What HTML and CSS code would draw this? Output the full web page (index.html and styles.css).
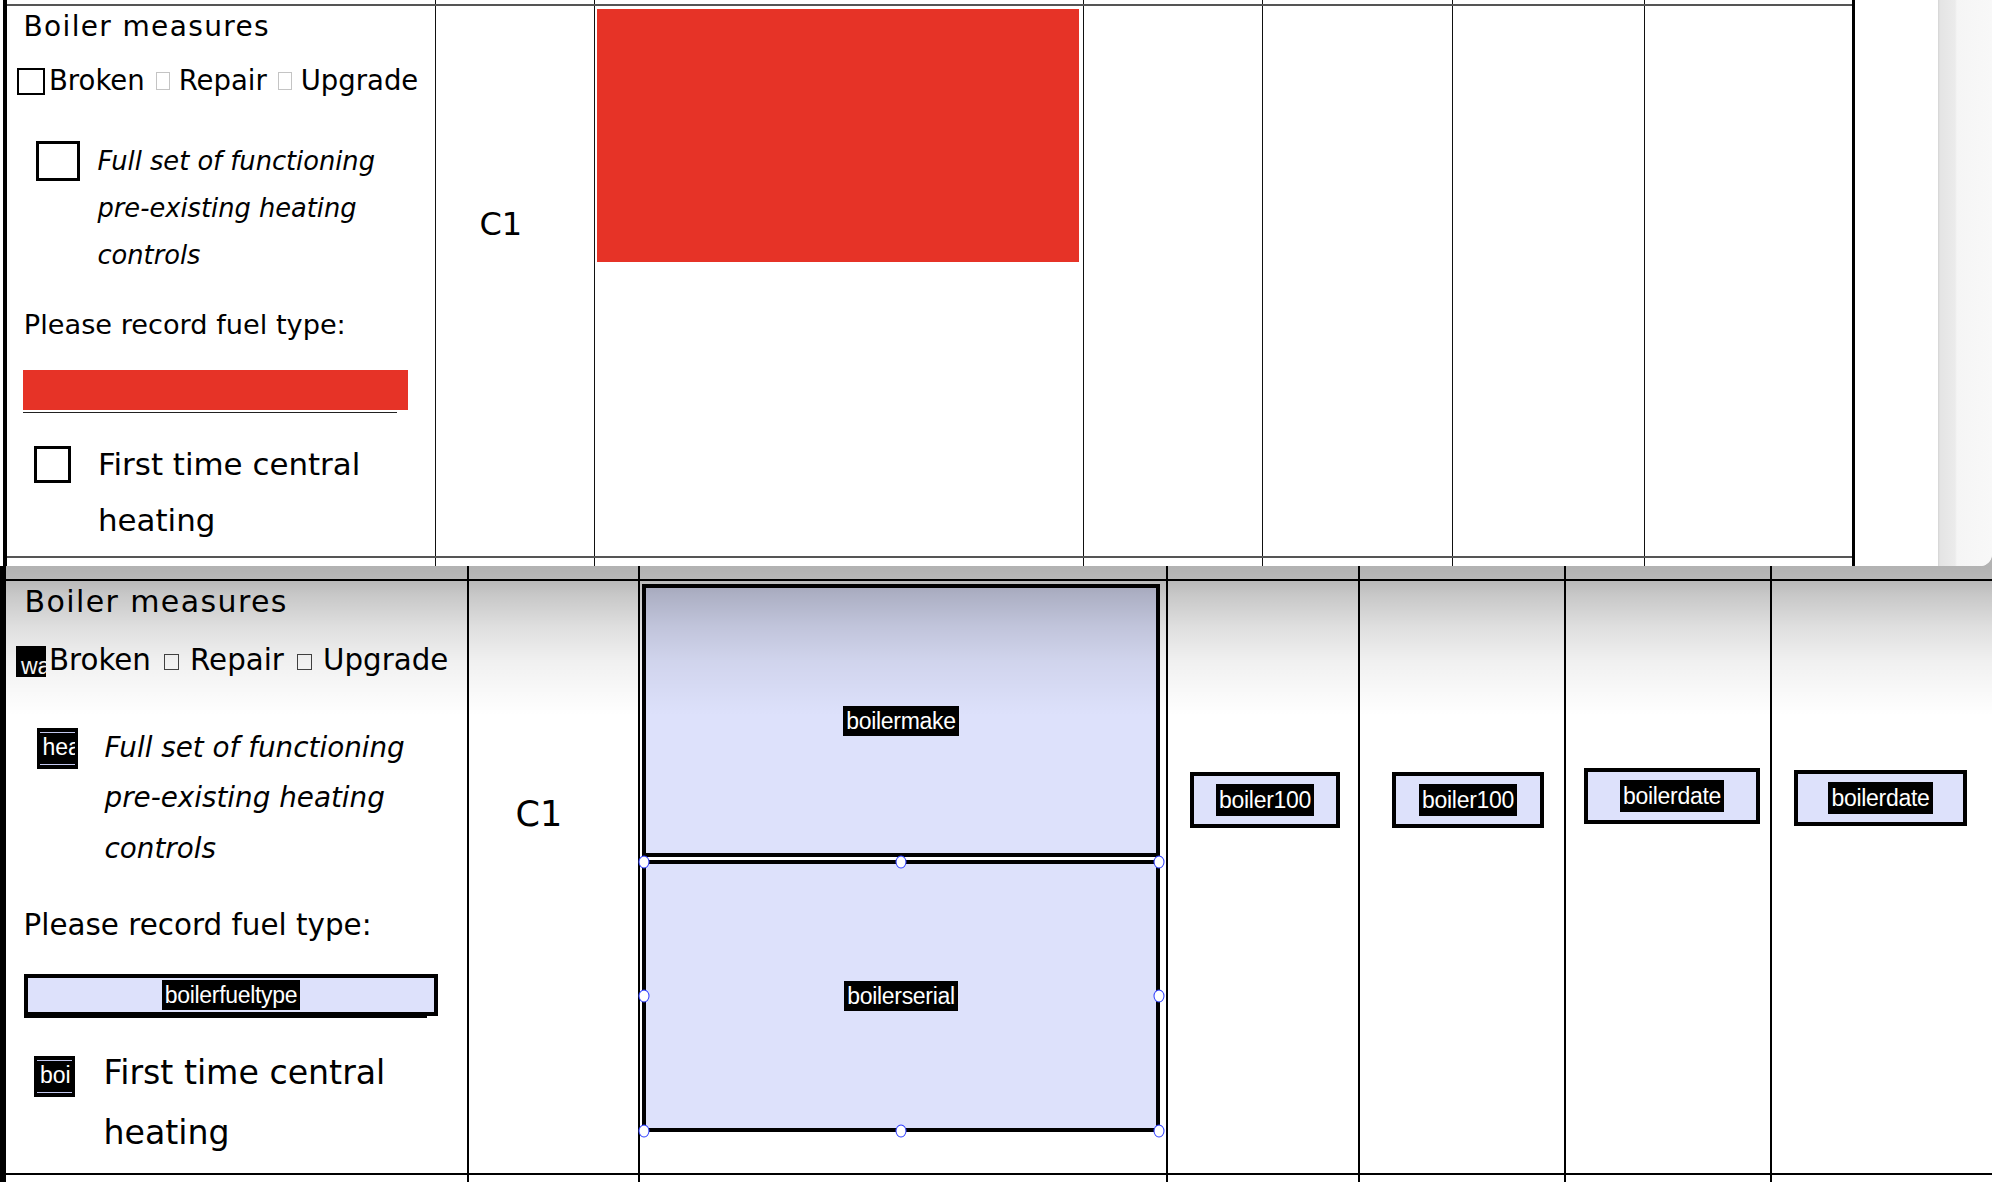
FILE: index.html
```html
<!DOCTYPE html>
<html lang="en">
<head>
<meta charset="utf-8">
<title>Boiler measures</title>
<link rel="stylesheet" href="styles.css">
</head>
<body>
<div class="win">
  <div class="doc">
    <div class="ttable">
      <div class="trow tprev">
        <div class="c"></div><div class="c"></div><div class="c"></div><div class="c"></div><div class="c"></div><div class="c"></div><div class="c"></div>
      </div>
      <div class="trow tmain">
        <div class="c tl">
          <div class="tl-title">Boiler measures</div>
          <div class="tl-opts">
            <span class="chk chk1"></span>
            <span class="opts">Broken <i class="tofu"></i> Repair <i class="tofu"></i> Upgrade</span>
          </div>
          <div class="tl-fn">
            <span class="chk chk2"></span>
            <div class="fn-text tfn">Full set of functioning<br>pre-existing heating<br>controls</div>
          </div>
          <div class="tl-fuel-label">Please record fuel type:</div>
          <div class="tl-red"></div>
          <div class="tl-rule"></div>
          <div class="tl-first">
            <span class="chk chk3"></span>
            <div class="first-text tfirst">First time central<br>heating</div>
          </div>
        </div>
        <div class="c tc1">C1</div>
        <div class="c"><div class="tred"></div></div>
        <div class="c"></div>
        <div class="c"></div>
        <div class="c"></div>
        <div class="c"></div>
      </div>
      <div class="trow tnext">
        <div class="c"></div><div class="c"></div><div class="c"></div><div class="c"></div><div class="c"></div><div class="c"></div><div class="c"></div>
      </div>
    </div>
  </div>
  <div class="vscroll"></div>
</div>

<div class="page">
  <div class="brow bprev">
    <div class="c"></div><div class="c"></div><div class="c"></div><div class="c"></div><div class="c"></div><div class="c"></div><div class="c"></div>
  </div>
  <div class="brow bmain">
    <div class="c bl">
      <div class="bl-title">Boiler measures</div>
      <div class="bl-opts">
        <span class="wbox">wa</span>
        <span class="opts">Broken <i class="tofu dark"></i> Repair <i class="tofu dark"></i> Upgrade</span>
      </div>
      <div class="bl-fn">
        <span class="cb cb-hea"><span class="cb-in">hea</span></span>
        <div class="fn-text bfn">Full set of functioning<br>pre-existing heating<br>controls</div>
      </div>
      <div class="bl-fuel-label">Please record fuel type:</div>
      <div class="fld bl-fuel"><span class="lbl">boilerfueltype</span></div>
      <div class="bl-rule"></div>
      <div class="bl-first">
        <span class="cb cb-boi"><span class="cb-in">boi</span></span>
        <div class="first-text bfirst">First time central<br>heating</div>
      </div>
    </div>
    <div class="c bc1">C1</div>
    <div class="c bfields">
      <div class="fld make"><span class="lbl">boilermake</span></div>
      <div class="fld serial">
        <span class="lbl">boilerserial</span>
        <i class="hdl h-tl"></i><i class="hdl h-tm"></i><i class="hdl h-tr"></i>
        <i class="hdl h-ml"></i><i class="hdl h-mr"></i>
        <i class="hdl h-bl"></i><i class="hdl h-bm"></i><i class="hdl h-br"></i>
      </div>
    </div>
    <div class="c"><div class="fld small f4"><span class="lbl">boiler100</span></div></div>
    <div class="c"><div class="fld small f5"><span class="lbl">boiler100</span></div></div>
    <div class="c"><div class="fld small f6"><span class="lbl">boilerdate</span></div></div>
    <div class="c"><div class="fld small f7"><span class="lbl">boilerdate</span></div></div>
  </div>
  <div class="brow bnext">
    <div class="c"></div><div class="c"></div><div class="c"></div><div class="c"></div><div class="c"></div><div class="c"></div><div class="c"></div>
  </div>
  <div class="shade"></div>
</div>
</body>
</html>
```

FILE: styles.css
```css
html, body {
  margin: 0;
  padding: 0;
  width: 1992px;
  height: 1182px;
  overflow: hidden;
}
body {
  background: #b3b3b3;
  font-family: "DejaVu Sans", Verdana, sans-serif;
  color: #000;
}
i { font-style: normal; }

/* ---------- top window ---------- */
.win {
  display: flex;
  height: 566px;
  background: #fff;
  border-bottom-right-radius: 12px;
  overflow: hidden;
}
.doc { flex: 1; background: #fff; }
.vscroll {
  width: 54px;
  background: linear-gradient(90deg, #d4d4d4 0, #e4e4e4 2px, #ebebeb 17px, #f5f5f5 19px, #f8f8f8 100%);
}
.ttable {
  margin-left: 3px;
  width: 1852px;
  height: 566px;
  box-sizing: border-box;
  border-left: 4px solid #000;
  border-right: 3px solid #000;
}
.trow {
  display: grid;
  grid-template-columns: 428px 159px 489px 179px 190px 192px 208px;
}
.c { box-sizing: border-box; min-width: 0; }
.trow > .c + .c { border-left: 1px solid #111; }
.tprev { height: 4px; }
.tmain {
  height: 554px;
  box-sizing: border-box;
  border-top: 2px solid #555;
  border-bottom: 2px solid #555;
}
.tnext { height: 8px; }

.chk {
  display: block;
  flex: none;
  box-sizing: border-box;
  border: 3px solid #000;
  background: #fff;
}
.opts { white-space: nowrap; }
.tofu {
  display: inline-block;
  box-sizing: border-box;
  width: 14px;
  height: 18px;
  margin: 0 0 0 2.5px;
  border: 1px solid #c4c4c4;
  vertical-align: baseline;
}
.tofu.dark {
  width: 15px;
  height: 16px;
  margin: 0 2px 0 3.5px;
  border-color: #444;
}
.fn-text { font-style: italic; white-space: nowrap; }
.first-text { white-space: nowrap; }

.tl-title {
  font-size: 28px;
  letter-spacing: 1.35px;
  line-height: 42px;
  padding-left: 16.5px;
  white-space: nowrap;
}
.tl-opts {
  display: flex;
  align-items: center;
  height: 64px;
  padding-left: 10px;
  font-size: 27.5px;
}
.chk1 { width: 28px; height: 27px; border-width: 2.7px; margin: 2px 4px 0 0; }
.tl-fn { display: flex; margin-top: 25.5px; }
.chk2 { width: 44px; height: 40px; margin: 3.5px 0 0 29px; }
.tfn { font-size: 25.7px; line-height: 47px; margin-left: 17.5px; }
.tl-fuel-label {
  margin-top: 26.5px;
  font-size: 27.2px;
  line-height: 40px;
  padding-left: 16.8px;
  white-space: nowrap;
}
.tl-red {
  margin: 25px 0 0 16px;
  width: 385px;
  height: 40px;
  background: #e63327;
}
.tl-rule {
  margin: 1.5px 0 0 16px;
  width: 374px;
  height: 1.5px;
  background: #222;
}
.tl-first { display: flex; margin-top: 23px; }
.chk3 { width: 37px; height: 37px; margin: 10px 0 0 27px; }
.tfirst { font-size: 30.9px; line-height: 56px; margin-left: 27px; }

.tc1 {
  padding: 198px 0 0 43.5px;
  font-size: 32px;
  line-height: 40px;
}
.tred {
  margin: 3px 0 0 2px;
  width: 482px;
  height: 253px;
  background: #e63327;
}

/* ---------- lower page (form editor) ---------- */
.page {
  position: relative;
  height: 616px;
  background: #fff;
}
.brow {
  display: grid;
  grid-template-columns: 461px 171px 528px 192px 206px 206px 222px;
  border-left: 6px solid #000;
}
.brow > .c + .c { border-left: 2px solid #000; }
.bprev { height: 13px; }
.bmain {
  height: 596px;
  box-sizing: border-box;
  border-top: 2px solid #000;
  border-bottom: 2px solid #000;
}
.bnext { height: 7px; }

.bl-title {
  margin-top: 1px;
  font-size: 30px;
  letter-spacing: 1.4px;
  line-height: 40px;
  padding-left: 18.5px;
  white-space: nowrap;
}
.bl-opts {
  display: flex;
  align-items: center;
  height: 76px;
  padding-left: 10px;
  font-size: 29.3px;
}
.wbox {
  flex: none;
  width: 30px;
  height: 31px;
  margin: 2px 3px 0 0;
  box-sizing: border-box;
  padding: 8px 0 0 5px;
  background: #000;
  color: #fff;
  overflow: hidden;
  white-space: nowrap;
  font: 23px/24px "Liberation Sans", Arial, sans-serif;
}
.cb {
  display: block;
  flex: none;
  width: 41px;
  height: 41px;
  box-sizing: border-box;
  padding: 4px 3px;
  background: #000;
}
.cb-in {
  display: block;
  height: 100%;
  box-sizing: border-box;
  border-top: 1px solid #c3c8f0;
  border-bottom: 1px solid #c3c8f0;
  overflow: hidden;
  white-space: nowrap;
  padding-left: 3px;
  color: #fff;
  font: 23px/29px "Liberation Sans", Arial, sans-serif;
}
.bl-fn { display: flex; margin-top: 24.75px; }
.cb-hea { margin: 5.25px 0 0 30.5px; }
.bfn { font-size: 27.8px; line-height: 50.5px; margin-left: 27px; }
.bl-fuel-label {
  margin-top: 30.75px;
  font-size: 29.4px;
  line-height: 40px;
  padding-left: 17.5px;
  white-space: nowrap;
}
.bl-fuel {
  margin: 29px 0 0 18px;
  width: 414px;
  height: 42px;
}
.bl-rule {
  margin-left: 18px;
  width: 403px;
  height: 2px;
  background: #000;
}
.bl-first { display: flex; margin-top: 25px; }
.cb-boi { margin: 13px 0 0 28px; }
.bfirst { font-size: 33.2px; line-height: 60px; margin-left: 28.5px; }

.bc1 {
  padding: 213px 0 0 46.5px;
  font-size: 35px;
  line-height: 40px;
}

.fld {
  box-sizing: border-box;
  border: 4px solid #000;
  background: #dde1fb;
  display: flex;
  align-items: center;
  justify-content: center;
}
.lbl {
  background: #000;
  color: #fff;
  font: 23px/30px "Liberation Sans", Arial, sans-serif;
  letter-spacing: -0.3px;
  padding: 0 3px;
  white-space: nowrap;
}
.bfields { padding: 3px 0 0 2px; }
.make { width: 518px; height: 273px; }
.serial { position: relative; margin-top: 3px; width: 518px; height: 272px; }
.small { height: 56px; }
.small .lbl { line-height: 32px; }
.f4 { margin: 191px 0 0 22px; width: 150px; }
.f5 { margin: 191px 0 0 32px; width: 152px; }
.f6 { margin: 187px 0 0 18px; width: 176px; }
.f7 { margin: 189px 0 0 22px; width: 173px; }

.hdl {
  position: absolute;
  width: 11px;
  height: 13px;
  box-sizing: border-box;
  border: 1.5px solid #2b3bff;
  border-radius: 50%;
  background: #fff;
  transform: translate(-50%, -50%);
}
.h-tl { left: -2.5px; top: -2px; }
.h-tm { left: 50%; top: -2px; }
.h-tr { left: calc(100% + 3px); top: -2px; }
.h-ml { left: -2.5px; top: 50%; }
.h-mr { left: calc(100% + 3px); top: 50%; }
.h-bl { left: -2.5px; top: calc(100% + 3px); }
.h-bm { left: 50%; top: calc(100% + 3px); }
.h-br { left: calc(100% + 3px); top: calc(100% + 3px); }

.shade {
  position: absolute;
  left: 0;
  top: 0;
  right: 0;
  height: 150px;
  pointer-events: none;
  background: linear-gradient(180deg,
    rgba(0,0,0,0.30) 0,
    rgba(0,0,0,0.28) 14px,
    rgba(0,0,0,0.22) 28px,
    rgba(0,0,0,0.13) 60px,
    rgba(0,0,0,0.06) 95px,
    rgba(0,0,0,0) 150px);
}
```
